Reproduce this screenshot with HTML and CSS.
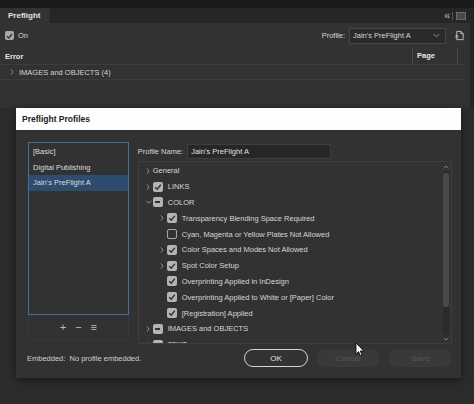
FILE: index.html
```html
<!DOCTYPE html>
<html lang="en">
<head>
    <meta charset="UTF-8">
    <title>Preflight</title>
    <link rel="stylesheet" href="styles.css">
</head>
<body>
    <div class="topbar"></div>

    <!-- --- TAB BAR --- -->
    <div class="tabbar">
        <div class="tab">Preflight</div>
        <div class="tab-tools">
            <span class="collapse">&lsaquo;&lsaquo;</span>
            <span class="divider"></span>
            <span class="menu-icon"></span>
        </div>
    </div>

    <!-- --- PANEL --- -->
    <div class="panel">
        <div class="options">
            <div class="on">
                <span class="cb cb-panel"><svg viewBox="0 0 10 10"><path d="M2.2 5.2 L4.2 7.2 L7.8 2.8" /></svg></span>
                <span>On</span>
            </div>
            <div class="profile">
                <span>Profile:</span>
                <div class="select">
                    <span>Jain's PreFlight A</span>
                    <svg class="caret" viewBox="0 0 8 5"><path d="M1 1 L4 4 L7 1" /></svg>
                </div>
                <svg class="doc-icon" viewBox="0 0 12 12"><path d="M3 1.5 H7.5 L10 4 V10.5 H3 Z M7.5 1.5 V4 H10" /><path d="M1.5 5.5 L4.5 8.5 M4.5 5.5 L1.5 8.5" /></svg>
            </div>
        </div>
        <div class="cols">
            <div class="col-error">Error</div>
            <div class="col-page">Page</div>
        </div>
        <div class="err-row">
            <span class="tw"><svg viewBox="0 0 4 6"><path d="M1 0.5 L3 3 L1 5.5" /></svg></span>
            IMAGES and OBJECTS (4)
        </div>
    </div>

    <!-- --- DIALOG --- -->
    <div class="dialog">
        <div class="dialog-title">Preflight Profiles</div>
        <div class="dialog-body">
            <div class="main">
                <div class="left">
                    <div class="list">
                        <div class="item">[Basic]</div>
                        <div class="item">Digital Publishing</div>
                        <div class="item selected">Jain's PreFlight A</div>
                    </div>
                    <div class="list-tools">
                        <span class="tool">+</span>
                        <span class="tool">&minus;</span>
                        <span class="tool">&equiv;</span>
                    </div>
                </div>
                <div class="right">
                    <div class="name-row">
                        <span>Profile Name:</span>
                        <div class="name-input">Jain's PreFlight A</div>
                    </div>
                    <div class="tree">
                        <div class="rows">
                            <div class="row l0"><span class="tw"><svg viewBox="0 0 4 6"><path d="M1 0.5 L3 3 L1 5.5" /></svg></span>General</div>
                            <div class="row l0"><span class="tw"><svg viewBox="0 0 4 6"><path d="M1 0.5 L3 3 L1 5.5" /></svg></span><span class="cb"><svg viewBox="0 0 10 10"><path d="M2.2 5.2 L4.2 7.2 L7.8 2.8" /></svg></span>LINKS</div>
                            <div class="row l0"><span class="tw"><svg viewBox="0 0 6 4"><path d="M0.5 1 L3 3 L5.5 1" /></svg></span><span class="cb mixed"><i></i></span>COLOR</div>
                            <div class="row l1"><span class="tw"><svg viewBox="0 0 4 6"><path d="M1 0.5 L3 3 L1 5.5" /></svg></span><span class="cb"><svg viewBox="0 0 10 10"><path d="M2.2 5.2 L4.2 7.2 L7.8 2.8" /></svg></span>Transparency Blending Space Required</div>
                            <div class="row l1"><span class="tw"></span><span class="cb off"></span>Cyan, Magenta or Yellow Plates Not Allowed</div>
                            <div class="row l1"><span class="tw"><svg viewBox="0 0 4 6"><path d="M1 0.5 L3 3 L1 5.5" /></svg></span><span class="cb"><svg viewBox="0 0 10 10"><path d="M2.2 5.2 L4.2 7.2 L7.8 2.8" /></svg></span>Color Spaces and Modes Not Allowed</div>
                            <div class="row l1"><span class="tw"><svg viewBox="0 0 4 6"><path d="M1 0.5 L3 3 L1 5.5" /></svg></span><span class="cb"><svg viewBox="0 0 10 10"><path d="M2.2 5.2 L4.2 7.2 L7.8 2.8" /></svg></span>Spot Color Setup</div>
                            <div class="row l1"><span class="tw"></span><span class="cb"><svg viewBox="0 0 10 10"><path d="M2.2 5.2 L4.2 7.2 L7.8 2.8" /></svg></span>Overprinting Applied in InDesign</div>
                            <div class="row l1"><span class="tw"></span><span class="cb"><svg viewBox="0 0 10 10"><path d="M2.2 5.2 L4.2 7.2 L7.8 2.8" /></svg></span>Overprinting Applied to White or [Paper] Color</div>
                            <div class="row l1"><span class="tw"></span><span class="cb"><svg viewBox="0 0 10 10"><path d="M2.2 5.2 L4.2 7.2 L7.8 2.8" /></svg></span>[Registration] Applied</div>
                            <div class="row l0"><span class="tw"><svg viewBox="0 0 4 6"><path d="M1 0.5 L3 3 L1 5.5" /></svg></span><span class="cb mixed"><i></i></span>IMAGES and OBJECTS</div>
                            <div class="row l0"><span class="tw"><svg viewBox="0 0 4 6"><path d="M1 0.5 L3 3 L1 5.5" /></svg></span><span class="cb mixed"><i></i></span>TEXT</div>
                        </div>
                        <div class="scrollbar">
                            <svg class="arrow" viewBox="0 0 6 4"><path d="M0.8 3 L3 1 L5.2 3" /></svg>
                            <div class="track"><div class="thumb"></div></div>
                            <svg class="arrow" viewBox="0 0 6 4"><path d="M0.8 1 L3 3 L5.2 1" /></svg>
                        </div>
                    </div>
                </div>
            </div>
            <div class="footer">
                <div class="embedded">Embedded:&nbsp; No profile embedded.</div>
                <div class="buttons">
                    <button class="btn btn-ok">OK</button>
                    <button class="btn btn-off">Cancel</button>
                    <button class="btn btn-off">Save</button>
                </div>
            </div>
        </div>
    </div>

    <!-- mouse pointer over the dialog -->
    <svg class="cursor" viewBox="0 0 10 15"><path d="M1 1 L1 12 L3.6 9.6 L5.4 13.8 L7 13.1 L5.3 9 L8.8 9 Z" /></svg>
</body>
</html>
```

FILE: styles.css
```css
/* --- RESET & GLOBAL STYLES --- */
* {
    margin: 0;
    padding: 0;
    box-sizing: border-box;
}

body {
    width: 474px;
    height: 404px;
    overflow: hidden;
    position: relative;
    background-color: #2c2c2c;
    font-family: "Liberation Sans", Arial, sans-serif;
    font-size: 7.5px;
    color: #d6d6d6;
}

svg {
    display: block;
}

/* --- TAB BAR --- */
.topbar {
    height: 8px;
    background-color: #1b1b1b;
}

.tabbar {
    height: 15px;
    display: flex;
    justify-content: space-between;
    background-color: #262626;
}

.tab {
    width: 50px;
    padding-left: 8px;
    line-height: 15px;
    font-size: 8px;
    font-weight: bold;
    color: #e2e2e2;
    background-color: #323232;
}

.tab-tools {
    display: flex;
    align-items: center;
    gap: 3px;
    padding-right: 8px;
}

.collapse {
    font-size: 10px;
    line-height: 10px;
    letter-spacing: -1px;
    color: #c8c8c8;
}

.divider {
    width: 1px;
    height: 8px;
    background-color: #555;
}

.menu-icon {
    width: 10px;
    height: 8px;
    border: 1px solid #6a6a6a;
    background-color: #4a4a4a;
}

/* --- PANEL --- */
.panel {
    background-color: #323232;
    height: 85px;
    border-right: 4px solid #262626;
}

.options {
    height: 25px;
    display: flex;
    justify-content: space-between;
    align-items: center;
    padding: 0 5px;
}

.on {
    display: flex;
    align-items: center;
    gap: 4px;
}

.profile {
    display: flex;
    align-items: center;
    gap: 4px;
}

.select {
    width: 97px;
    height: 16px;
    display: flex;
    justify-content: space-between;
    align-items: center;
    padding: 0 5px 0 3px;
    background-color: #2a2a2a;
    border: 1px solid #454545;
    margin-right: 4px;
}

.caret {
    width: 7px;
    height: 5px;
    fill: none;
    stroke: #aaa;
    stroke-width: 1;
}

.doc-icon {
    width: 11px;
    height: 11px;
    fill: none;
    stroke: #c8c8c8;
    stroke-width: 1;
}

.cols {
    height: 16px;
    display: flex;
    justify-content: space-between;
    align-items: center;
    font-weight: bold;
    color: #e6e6e6;
    padding-left: 5px;
}

.col-page {
    width: 46px;
    height: 16px;
    line-height: 16px;
    padding-left: 4px;
    border-left: 1px solid #4a4a4a;
    border-right: 1px solid #4a4a4a;
    margin-right: 12px;
}

.err-row {
    height: 16px;
    display: flex;
    align-items: center;
    gap: 2px;
    padding-left: 10px;
    border-top: 1px solid #3d3d3d;
    border-bottom: 1px solid #3d3d3d;
    margin-right: 6px;
}

.tw {
    width: 7px;
    flex-shrink: 0;
    display: flex;
    align-items: center;
}

.tw svg {
    width: 4px;
    height: 6px;
    fill: none;
    stroke: #9a9a9a;
    stroke-width: 0.9;
}

.tw svg[viewBox="0 0 6 4"] {
    width: 6px;
    height: 4px;
}

/* --- DIALOG --- */
.dialog {
    position: absolute;
    left: 16px;
    top: 108px;
    width: 445px;
    height: 270px;
    background-color: #323232;
    box-shadow: 0 2px 8px rgba(0, 0, 0, 0.5);
}

.dialog-title {
    height: 22px;
    line-height: 22px;
    padding-left: 6px;
    background-color: #fdfdfd;
    color: #222;
    font-size: 8.5px;
    font-weight: 600;
}

.dialog-body {
    padding: 12px 9px 0 12px;
}

.main {
    display: flex;
    gap: 9px;
}

.left {
    width: 101px;
    height: 198px;
    display: flex;
    flex-direction: column;
    border: 1px solid #393939;
}

.list {
    height: 173px;
    border: 1px solid #4d6e9a;
    margin: -1px -1px 0 -1px;
    padding-top: 1px;
}

.item {
    height: 15.6px;
    line-height: 15.6px;
    padding-left: 4px;
    color: #dcdcdc;
}

.item.selected {
    background-color: #2d4c6e;
}

.list-tools {
    flex: 1;
    display: flex;
    justify-content: center;
    align-items: center;
    gap: 9px;
    color: #bdbdbd;
    font-size: 11px;
}

.right {
    width: 315px;
    display: flex;
    flex-direction: column;
}

.name-row {
    height: 18px;
    display: flex;
    align-items: center;
    gap: 4px;
    margin-bottom: 1px;
}

.name-input {
    width: 144px;
    height: 15px;
    line-height: 13px;
    padding-left: 3px;
    background-color: #272727;
    border: 1px solid #3e3e3e;
    color: #e0e0e0;
}

.tree {
    height: 183px;
    display: flex;
    border: 1px solid #3e3e3e;
    overflow: hidden;
}

.rows {
    flex: 1;
    padding-top: 1px;
}

.row {
    height: 15.8px;
    display: flex;
    align-items: center;
    white-space: nowrap;
    color: #d6d6d6;
}

.row.l0 {
    padding-left: 7px;
}

.row.l1 {
    padding-left: 21px;
}

.cb {
    width: 10px;
    height: 10px;
    flex-shrink: 0;
    margin-right: 5px;
    border-radius: 2px;
    background-color: #b4b4b4;
    display: flex;
    align-items: center;
    justify-content: center;
}

.cb svg {
    width: 10px;
    height: 10px;
    fill: none;
    stroke: #333;
    stroke-width: 1.4;
}

.cb.off {
    background-color: transparent;
    border: 1px solid #a8a8a8;
}

.cb.mixed i {
    width: 5px;
    height: 2px;
    background-color: #333;
}

.cb-panel {
    width: 9px;
    height: 9px;
    margin-right: 0;
    background-color: #a8a8a8;
}

.scrollbar {
    width: 10px;
    display: flex;
    flex-direction: column;
    align-items: center;
    padding: 3px 0 2px;
    gap: 2px;
}

.arrow {
    width: 6px;
    height: 4px;
    fill: none;
    stroke: #8a8a8a;
    stroke-width: 0.9;
}

.track {
    flex: 1;
    width: 6px;
    border-radius: 3px;
    background-color: #2b2b2b;
}

.thumb {
    height: 134px;
    margin-top: 2px;
    border-radius: 3px;
    background-color: #4a4a4a;
}

.footer {
    display: flex;
    justify-content: space-between;
    align-items: center;
    height: 28px;
}

.embedded {
    margin-left: -1px;
    color: #d0d0d0;
}

.buttons {
    display: flex;
    gap: 8px;
}

.btn {
    width: 64px;
    height: 18px;
    border-radius: 9px;
    font-family: "Liberation Sans", Arial, sans-serif;
    font-size: 8px;
    cursor: pointer;
}

.btn-ok {
    background-color: #333;
    border: 1.5px solid #d4d4d4;
    color: #e0e0e0;
}

.btn-off {
    background-color: #393939;
    border: none;
    color: #575757;
}

.cursor {
    position: absolute;
    left: 355px;
    top: 342px;
    width: 10px;
    height: 15px;
    fill: #fff;
    stroke: #000;
    stroke-width: 0.8;
}
```
